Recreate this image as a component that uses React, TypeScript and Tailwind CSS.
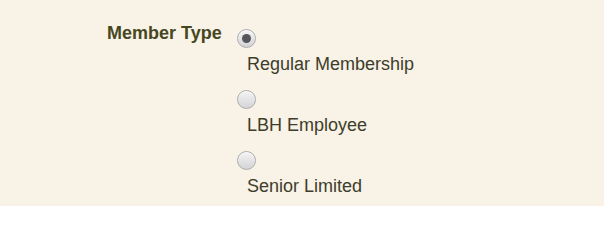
import { useState } from "react";

const options = ["Regular Membership", "LBH Employee", "Senior Limited"];

function Radio({ checked }: { checked: boolean }) {
    return (
        <span className="flex h-[19px] w-[19px] items-center justify-center rounded-full border border-[#acacac] bg-gradient-to-b from-[#f4f4f4] to-[#d4d4d8] shadow-[inset_0_1px_1px_rgba(255,255,255,0.8)]">
            {checked && <span className="h-[9px] w-[9px] rounded-full bg-[#55555d]" />}
        </span>
    );
}

export default function App() {
    const [selected, setSelected] = useState(0);

    return (
        <div className="h-[206px] w-full bg-[#f8f2e7] font-['Liberation_Sans',Arial,sans-serif]">
            <div className="flex pt-[21px]">
                <div className="w-[237px] shrink-0 pl-[107px]">
                    <span className="text-[18px] font-bold leading-[24px] text-[#47471f]">Member Type</span>
                </div>
                <div className="flex flex-col">
                    {options.map((name, i) => (
                        <label
                            key={i}
                            className="flex h-[61px] cursor-pointer flex-col"
                            onClick={() => setSelected(i)}
                        >
                            <span className="mt-[8px]">
                                <Radio checked={selected === i} />
                            </span>
                            <span className="ml-[10px] mt-[5px] text-[18px] leading-[22px] text-[#3d3d2a]">{name}</span>
                        </label>
                    ))}
                </div>
            </div>
        </div>
    );
}
